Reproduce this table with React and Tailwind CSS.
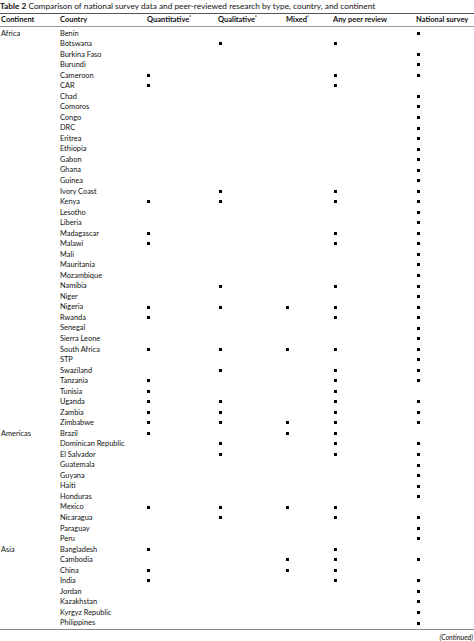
const Q = "quant";
const L = "qual";
const M = "mixed";
const A = "any";
const N = "ns";

const rows = [
  ["Africa", "Benin", [N]],
  ["", "Botswana", [L, A]],
  ["", "Burkina Faso", [N]],
  ["", "Burundi", [N]],
  ["", "Cameroon", [Q, A, N]],
  ["", "CAR", [Q, A]],
  ["", "Chad", [N]],
  ["", "Comoros", [N]],
  ["", "Congo", [N]],
  ["", "DRC", [N]],
  ["", "Eritrea", [N]],
  ["", "Ethiopia", [N]],
  ["", "Gabon", [N]],
  ["", "Ghana", [N]],
  ["", "Guinea", [N]],
  ["", "Ivory Coast", [L, A, N]],
  ["", "Kenya", [Q, L, A, N]],
  ["", "Lesotho", [N]],
  ["", "Liberia", [N]],
  ["", "Madagascar", [Q, A, N]],
  ["", "Malawi", [Q, A, N]],
  ["", "Mali", [N]],
  ["", "Mauritania", [N]],
  ["", "Mozambique", [N]],
  ["", "Namibia", [L, A, N]],
  ["", "Niger", [N]],
  ["", "Nigeria", [Q, L, M, A, N]],
  ["", "Rwanda", [Q, A, N]],
  ["", "Senegal", [N]],
  ["", "Sierra Leone", [N]],
  ["", "South Africa", [Q, L, M, A, N]],
  ["", "STP", [N]],
  ["", "Swaziland", [L, A, N]],
  ["", "Tanzania", [Q, A, N]],
  ["", "Tunisia", [Q, A]],
  ["", "Uganda", [Q, L, A, N]],
  ["", "Zambia", [Q, L, A, N]],
  ["", "Zimbabwe", [Q, L, M, A, N]],
  ["Americas", "Brazil", [Q, M, A]],
  ["", "Dominican Republic", [L, A, N]],
  ["", "El Salvador", [L, A, N]],
  ["", "Guatemala", [N]],
  ["", "Guyana", [N]],
  ["", "Haiti", [N]],
  ["", "Honduras", [N]],
  ["", "Mexico", [Q, L, M, A]],
  ["", "Nicaragua", [L, A, N]],
  ["", "Paraguay", [N]],
  ["", "Peru", [N]],
  ["Asia", "Bangladesh", [Q, A]],
  ["", "Cambodia", [M, A, N]],
  ["", "China", [Q, M, A]],
  ["", "India", [Q, A, N]],
  ["", "Jordan", [N]],
  ["", "Kazakhstan", [N]],
  ["", "Kyrgyz Republic", [N]],
  ["", "Philippines", [N]],
];

const cols = "grid grid-cols-[60px_87px_71px_68px_47px_83px_1fr]";

function Mark({ on, className }) {
  return (
    <div className="flex items-center">
      {on && <span className={"block w-[3px] h-[3px] bg-black " + className} />}
    </div>
  );
}

export default function App() {
  return (
    <div
      className="w-[474px] h-[641px] bg-white text-[#111] overflow-hidden"
      style={{ fontFamily: "Lato, 'Open Sans', sans-serif" }}
    >
      <div className="text-[8.3px] leading-[10px] pt-[1px] whitespace-nowrap">
        <span className="font-bold">Table 2</span> Comparison of national survey data and peer-reviewed research by type, country, and continent
      </div>

      <div className="mt-[1.5px] border-t border-[#555]" />
      <div className={cols + " h-[12.5px] items-center text-[7.5px] font-bold"}>
        <div className="pl-[1px]">Continent</div>
        <div>Country</div>
        <div>
          Quantitative<sup className="text-[3px] align-super">a</sup>
        </div>
        <div>
          Qualitative<sup className="text-[3px] align-super">a</sup>
        </div>
        <div>
          Mixed<sup className="text-[3px] align-super">a</sup>
        </div>
        <div>Any peer review</div>
        <div>National survey</div>
      </div>
      <div className="border-t border-[#999]" />

      <div className="pt-[1px]">
        {rows.map(([cont, country, marks]) => (
          <div key={country} className={cols + " h-[10.54px] items-center text-[7.4px] leading-none"}>
            <div className="pl-[1px]">{cont}</div>
            <div>{country}</div>
            <Mark on={marks.includes(Q)} className="ml-[0px]" />
            <Mark on={marks.includes(L)} className="ml-[0.5px]" />
            <Mark on={marks.includes(M)} className="ml-[0px]" />
            <Mark on={marks.includes(A)} className="ml-[0.5px]" />
            <Mark on={marks.includes(N)} className="ml-[1px]" />
          </div>
        ))}
      </div>

      <div className="mt-[0.5px] border-t border-[#888]" />
      <div className="text-right italic text-[7px] pt-[2px] pr-[1px]">(Continued)</div>
    </div>
  );
}
